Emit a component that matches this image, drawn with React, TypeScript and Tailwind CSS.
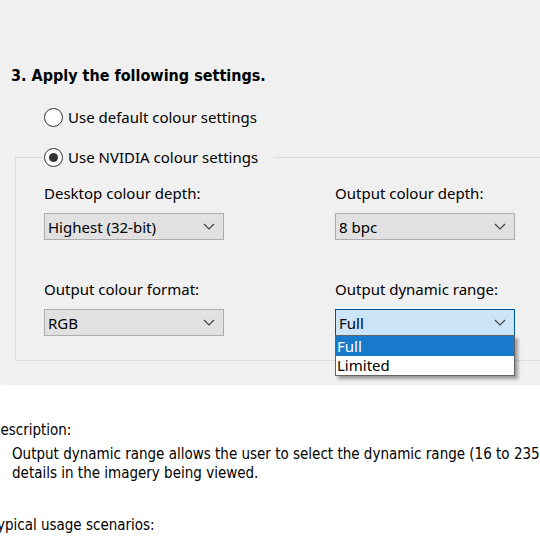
import React from "react";

const ui = "font-['Noto_Sans',sans-serif]";
const tahoma = "font-['DejaVu_Sans_Condensed','DejaVu_Sans',sans-serif]";

function Chevron() {
    return (
        <svg width="12" height="7" viewBox="0 0 12 7" className="shrink-0">
            <path d="M1 1 L6 6 L11 1" fill="none" stroke="#404040" strokeWidth="1.1" />
        </svg>
    );
}

function Radio({ checked, label }: { checked: boolean; label: string }) {
    return (
        <div className="flex items-center h-[20px]">
            <span className="w-[19px] h-[19px] rounded-full border border-[#333] bg-white flex items-center justify-center">
                {checked && <span className="w-[9px] h-[9px] rounded-full bg-[#333]" />}
            </span>
            <span className="ml-[5px] text-[15px] leading-[20px] text-black">{label}</span>
        </div>
    );
}

function Select({ value, open }: { value: string; open?: boolean }) {
    return (
        <div className="relative mt-[10px]">
            <div
                className={
                    open
                        ? "h-[27px] w-[180px] border border-[#005499] bg-[#cce4f7] flex items-center justify-between pl-[3px] pr-[8px]"
                        : "h-[27px] w-[180px] border border-[#adadad] bg-[#e1e1e1] flex items-center justify-between pl-[3px] pr-[8px]"
                }
            >
                <span className="text-[15px] leading-[20px] text-black">{value}</span>
                <Chevron />
            </div>
            {open && (
                <div className="absolute left-0 top-[26px] w-[180px] border border-[#646464] bg-white shadow-[3px_3px_3px_rgba(0,0,0,0.35)] z-10">
                    <div className="h-[20px] bg-[#1979ca] text-white text-[15px] leading-[20px] pl-[1px]">Full</div>
                    <div className="h-[19px] text-black text-[15px] leading-[19px] pl-[1px]">Limited</div>
                </div>
            )}
        </div>
    );
}

function Field({ label, value, open }: { label: string; value: string; open?: boolean }) {
    return (
        <div className="w-[180px]">
            <div className="text-[15px] leading-[20px] text-black">{label}</div>
            <Select value={value} open={open} />
        </div>
    );
}

export default function App() {
    return (
        <div className={`w-[540px] h-[540px] overflow-hidden bg-white ${ui}`}>
            <div className="h-[385px] bg-[#f0f0f0] rounded-bl-[3px] pt-[66px]">
                <div className={`pl-[11px] text-[16px] leading-[20px] font-bold text-black ${tahoma}`}>
                    3. Apply the following settings.
                </div>
                <div className="pl-[44px] mt-[21px]">
                    <Radio checked={false} label="Use default colour settings" />
                </div>
                <fieldset className="ml-[15px] mt-[20px] w-[600px] border border-[#dcdcdc] pl-[28px] pb-[24px]">
                    <legend className="pr-[16px]">
                        <Radio checked label="Use NVIDIA colour settings" />
                    </legend>
                    <div className="grid grid-cols-[180px_180px] gap-x-[111px] gap-y-[39px] pt-[16px]">
                        <Field label="Desktop colour depth:" value="Highest (32-bit)" />
                        <Field label="Output colour depth:" value="8 bpc" />
                        <Field label="Output colour format:" value="RGB" />
                        <Field label="Output dynamic range:" value="Full" open />
                    </div>
                </fieldset>
            </div>
            <div className={`text-[15px] leading-[19px] text-black ${tahoma}`}>
                <div className="ml-[-10px] mt-[36px] whitespace-nowrap">Description:</div>
                <div className="pl-[12px] mt-[5px] whitespace-nowrap">
                    Output dynamic range allows the user to select the dynamic range (16 to 235 or 0 to 255) for
                </div>
                <div className="pl-[12px] whitespace-nowrap">details in the imagery being viewed.</div>
                <div className="ml-[-9px] mt-[33px] whitespace-nowrap">Typical usage scenarios:</div>
            </div>
        </div>
    );
}
